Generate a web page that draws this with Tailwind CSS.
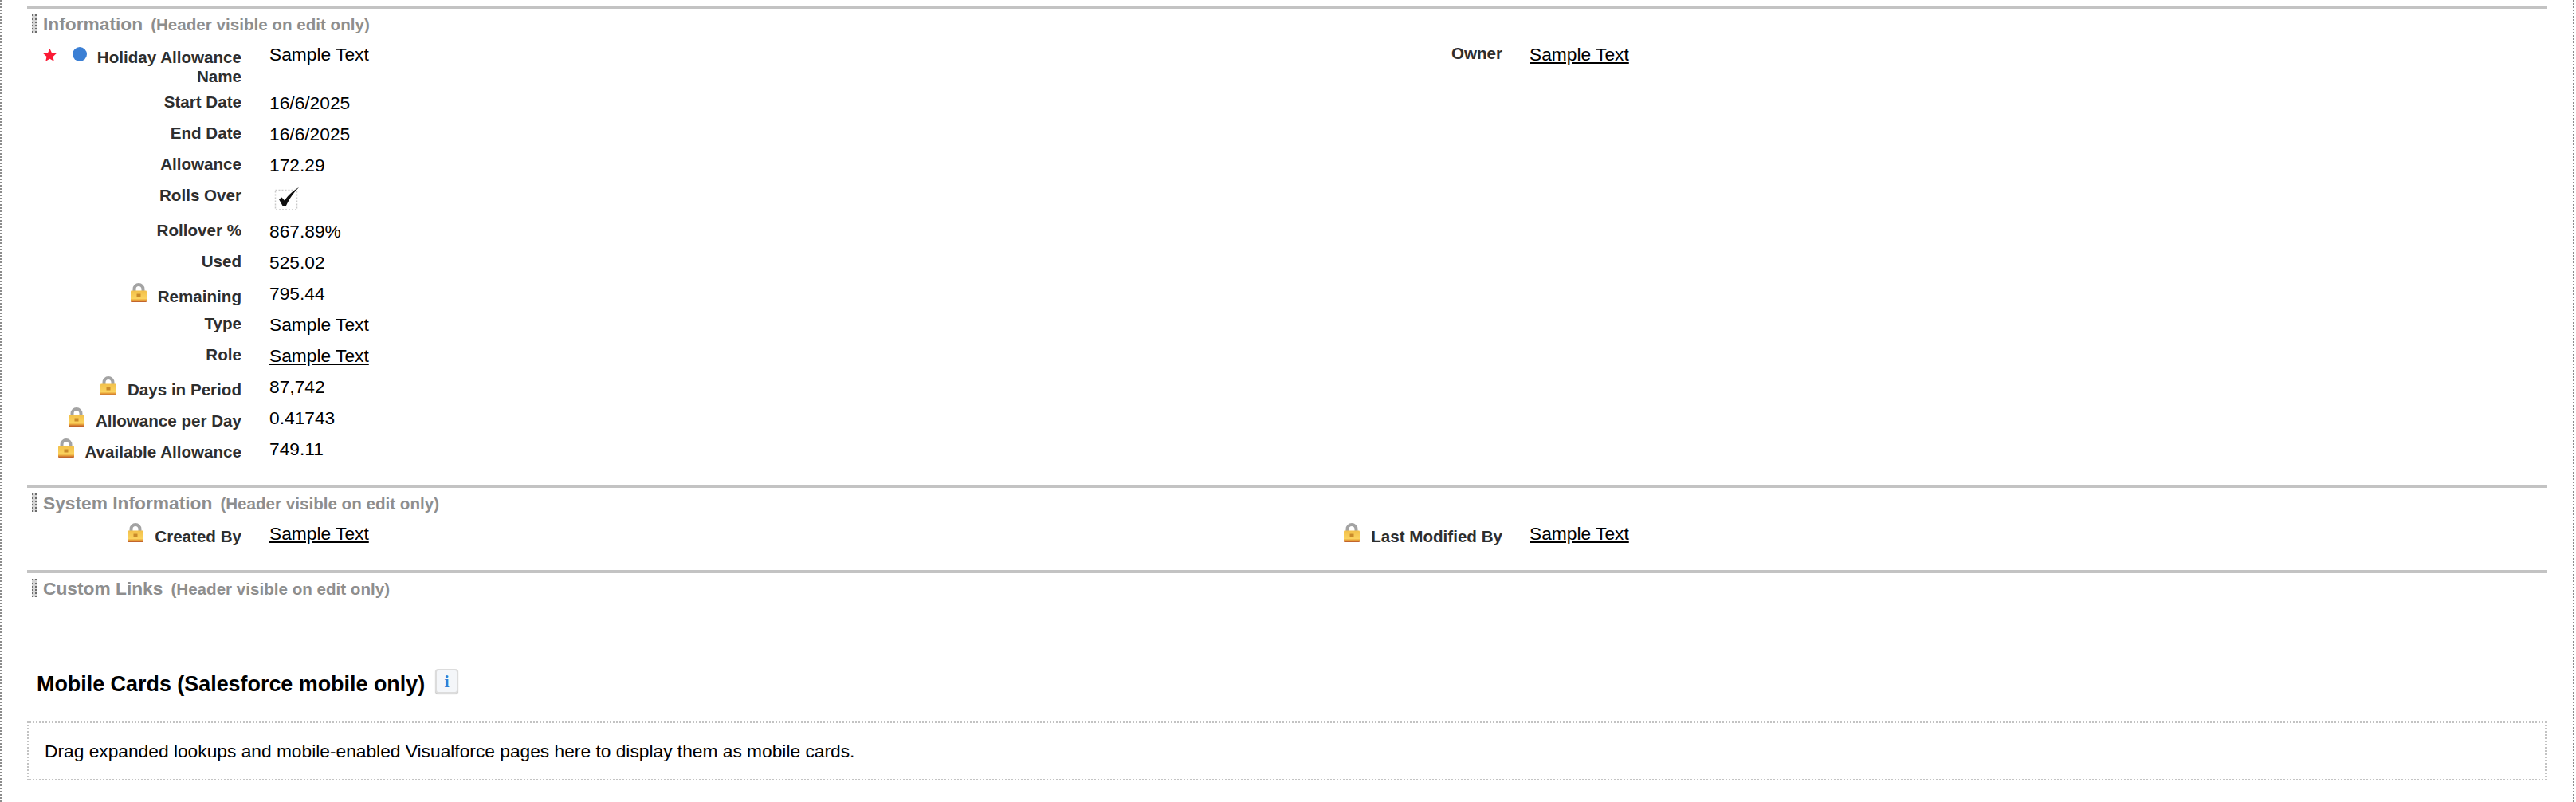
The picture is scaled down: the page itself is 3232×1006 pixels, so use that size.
<!DOCTYPE html>
<html lang="en">
<head>
  <meta charset="UTF-8" />
  <title>Holiday Allowance Layout</title>
  <script src="https://cdn.jsdelivr.net/npm/@tailwindcss/browser@4"></script>
</head>
<body class="bg-white font-['Liberation_Sans',Arial,sans-serif] overflow-hidden">
  <svg class="absolute w-0 h-0" width="0" height="0">
    <defs>
      <linearGradient id="lockBody" x1="0" y1="0" x2="0" y2="1">
        <stop offset="0" stop-color="#f2c04a" />
        <stop offset="0.7" stop-color="#fbd35f" />
        <stop offset="0.82" stop-color="#e8a23a" />
        <stop offset="1" stop-color="#b9572a" />
      </linearGradient>
      <symbol id="lock" viewBox="0 0 20 24">
        <path d="M4.500 11V7.500a5.500 5.500 0 0 1 11 0V11" fill="none" stroke="#a3a3a3" stroke-width="4" />
        <rect x="0" y="9.500" width="20" height="14.500" rx="1" fill="url(#lockBody)" />
        <rect x="7.500" y="13.500" width="5" height="4" fill="#c98a2a" />
      </symbol>
    </defs>
  </svg>

  <div class="w-[3230px] h-[1006px] border-x-2 border-dotted border-[#8c8c8c] text-black">

    <!-- Information -->
    <section class="ml-[32px] mr-[33px] pt-[7px]">
      <div class="border-t-4 border-[#c3c3c3] h-[48px] flex items-start pt-[7px] pl-[6px]">
        <div class="w-[6px] h-[23px] border-x-2 border-dotted border-[#6b6b6b] bg-[#d4d4d4] shrink-0"></div>
        <span class="ml-[8px] text-[22.75px] leading-[24px] font-bold text-[#8e8e8e]">Information</span>
        <span class="ml-[10px] text-[20.6px] leading-[26px] font-bold text-[#8e8e8e]">(Header visible on edit only)</span>
      </div>

      <div class="grid grid-cols-[1581px_1fr] h-[61px]">
        <div class="flex">
          <div class="w-[269px] flex items-start justify-end">
            <span class="mt-[6px] mr-[20px] text-[#fb1a35]">
              <svg class="block w-[17px] h-[17px]" viewBox="0 0 16 16"><path d="M8 0l2.300 5 5.500.600-4 3.700 1.100 5.500L8 12l-4.900 2.800 1.100-5.500-4-3.700L5.700 5z" fill="currentColor" /></svg>
            </span>
            <span class="mt-[4px] mr-[12px] w-[18px] h-[18px] rounded-full bg-[#3b7fd4] shrink-0"></span>
            <span class="w-[182px] mt-[5px] text-right text-[20.6px] leading-[24px] font-bold text-[#2e2e2e]">Holiday Allowance Name</span>
          </div>
          <div class="ml-[35px] mt-[1px] text-[22.75px] leading-[24px]">Sample Text</div>
        </div>
        <div class="flex">
          <div class="w-[270px] text-right text-[20.6px] leading-[24px] font-bold text-[#2e2e2e]">Owner</div>
          <a class="ml-[34px] mt-[1px] h-fit text-[22.75px] leading-[24px] underline">Sample Text</a>
        </div>
      </div>

      <div class="flex h-[39px]">
        <div class="w-[269px] text-right text-[20.6px] leading-[24px] font-bold text-[#2e2e2e]">Start Date</div>
        <div class="ml-[35px] mt-[1px] text-[22.75px] leading-[24px]">16/6/2025</div>
      </div>
      <div class="flex h-[39px]">
        <div class="w-[269px] text-right text-[20.6px] leading-[24px] font-bold text-[#2e2e2e]">End Date</div>
        <div class="ml-[35px] mt-[1px] text-[22.75px] leading-[24px]">16/6/2025</div>
      </div>
      <div class="flex h-[39px]">
        <div class="w-[269px] text-right text-[20.6px] leading-[24px] font-bold text-[#2e2e2e]">Allowance</div>
        <div class="ml-[35px] mt-[1px] text-[22.75px] leading-[24px]">172.29</div>
      </div>
      <div class="flex h-[44px]">
        <div class="w-[269px] text-right text-[20.6px] leading-[24px] font-bold text-[#2e2e2e]">Rolls Over</div>
        <div class="ml-[35px] w-[40px] h-[32px]">
          <svg class="block w-[40px] h-[32px]" viewBox="0 0 40 32">
            <rect x="7.500" y="5.500" width="27" height="24.500" fill="none" stroke="#c9c9c9" stroke-width="1.500" stroke-dasharray="2 2" />
            <path d="M12 17l3.500-2.500L19 18.500C24 11 30 6 37 2c-7 7-12 14-16.500 24H17z" fill="#111" />
          </svg>
        </div>
      </div>
      <div class="flex h-[39px]">
        <div class="w-[269px] text-right text-[20.6px] leading-[24px] font-bold text-[#2e2e2e]">Rollover %</div>
        <div class="ml-[35px] mt-[1px] text-[22.75px] leading-[24px]">867.89%</div>
      </div>
      <div class="flex h-[39px]">
        <div class="w-[269px] text-right text-[20.6px] leading-[24px] font-bold text-[#2e2e2e]">Used</div>
        <div class="ml-[35px] mt-[1px] text-[22.75px] leading-[24px]">525.02</div>
      </div>
      <div class="flex h-[39px]">
        <div class="w-[269px] flex justify-end items-start gap-[14px]">
          <svg class="w-[20px] h-[24px]"><use href="#lock" /></svg>
          <span class="mt-[5px] text-[20.6px] leading-[24px] font-bold text-[#2e2e2e]">Remaining</span>
        </div>
        <div class="ml-[35px] mt-[1px] text-[22.75px] leading-[24px]">795.44</div>
      </div>
      <div class="flex h-[39px]">
        <div class="w-[269px] text-right text-[20.6px] leading-[24px] font-bold text-[#2e2e2e]">Type</div>
        <div class="ml-[35px] mt-[1px] text-[22.75px] leading-[24px]">Sample Text</div>
      </div>
      <div class="flex h-[39px]">
        <div class="w-[269px] text-right text-[20.6px] leading-[24px] font-bold text-[#2e2e2e]">Role</div>
        <a class="ml-[35px] mt-[1px] h-fit text-[22.75px] leading-[24px] underline">Sample Text</a>
      </div>
      <div class="flex h-[39px]">
        <div class="w-[269px] flex justify-end items-start gap-[14px]">
          <svg class="w-[20px] h-[24px]"><use href="#lock" /></svg>
          <span class="mt-[5px] text-[20.6px] leading-[24px] font-bold text-[#2e2e2e]">Days in Period</span>
        </div>
        <div class="ml-[35px] mt-[1px] text-[22.75px] leading-[24px]">87,742</div>
      </div>
      <div class="flex h-[39px]">
        <div class="w-[269px] flex justify-end items-start gap-[14px]">
          <svg class="w-[20px] h-[24px]"><use href="#lock" /></svg>
          <span class="mt-[5px] text-[20.6px] leading-[24px] font-bold text-[#2e2e2e]">Allowance per Day</span>
        </div>
        <div class="ml-[35px] mt-[1px] text-[22.75px] leading-[24px]">0.41743</div>
      </div>
      <div class="flex h-[58px]">
        <div class="w-[269px] flex justify-end items-start gap-[14px]">
          <svg class="w-[20px] h-[24px]"><use href="#lock" /></svg>
          <span class="mt-[5px] text-[20.6px] leading-[24px] font-bold text-[#2e2e2e]">Available Allowance</span>
        </div>
        <div class="ml-[35px] mt-[1px] text-[22.75px] leading-[24px]">749.11</div>
      </div>
    </section>

    <!-- System Information -->
    <section class="ml-[32px] mr-[33px]">
      <div class="border-t-4 border-[#c3c3c3] h-[48px] flex items-start pt-[7px] pl-[6px]">
        <div class="w-[6px] h-[23px] border-x-2 border-dotted border-[#6b6b6b] bg-[#d4d4d4] shrink-0"></div>
        <span class="ml-[8px] text-[22.75px] leading-[24px] font-bold text-[#8e8e8e]">System Information</span>
        <span class="ml-[10px] text-[20.6px] leading-[26px] font-bold text-[#8e8e8e]">(Header visible on edit only)</span>
      </div>
      <div class="grid grid-cols-[1581px_1fr] h-[59px]">
        <div class="flex">
          <div class="w-[269px] flex justify-end items-start gap-[14px]">
            <svg class="w-[20px] h-[24px]"><use href="#lock" /></svg>
            <span class="mt-[5px] text-[20.6px] leading-[24px] font-bold text-[#2e2e2e]">Created By</span>
          </div>
          <a class="ml-[35px] mt-[1px] h-fit text-[22.75px] leading-[24px] underline">Sample Text</a>
        </div>
        <div class="flex">
          <div class="w-[270px] flex justify-end items-start gap-[14px]">
            <svg class="w-[20px] h-[24px]"><use href="#lock" /></svg>
            <span class="mt-[5px] text-[20.6px] leading-[24px] font-bold text-[#2e2e2e]">Last Modified By</span>
          </div>
          <a class="ml-[34px] mt-[1px] h-fit text-[22.75px] leading-[24px] underline">Sample Text</a>
        </div>
      </div>
    </section>

    <!-- Custom Links -->
    <section class="ml-[32px] mr-[33px]">
      <div class="border-t-4 border-[#c3c3c3] h-[48px] flex items-start pt-[7px] pl-[6px]">
        <div class="w-[6px] h-[23px] border-x-2 border-dotted border-[#6b6b6b] bg-[#d4d4d4] shrink-0"></div>
        <span class="ml-[8px] text-[22.75px] leading-[24px] font-bold text-[#8e8e8e]">Custom Links</span>
        <span class="ml-[10px] text-[20.6px] leading-[26px] font-bold text-[#8e8e8e]">(Header visible on edit only)</span>
      </div>
    </section>

    <!-- Mobile Cards -->
    <section class="ml-[32px] mr-[33px] mt-[72px]">
      <div class="flex items-start h-[70px] pl-[12px]">
        <h2 class="mt-[7px] text-[26.9px] leading-[32px] font-bold">Mobile Cards (Salesforce mobile only)</h2>
        <div class="ml-[13px] mt-[4px] w-[29px] h-[31px] rounded-[4px] border-2 border-[#dcdcdc] bg-[#f4f6f9] shadow-[0_1px_1px_#bbb] flex items-center justify-center font-['Liberation_Serif',serif] text-[22px] leading-[22px] font-bold text-[#2f7fd6]">i</div>
      </div>
      <div class="h-[74px] border-2 border-dotted border-[#c3c3c3] pl-[20px] flex items-center text-[22.75px] leading-[24px]">
        Drag expanded lookups and mobile-enabled Visualforce pages here to display them as mobile cards.
      </div>
    </section>
  </div>
</body>
</html>
